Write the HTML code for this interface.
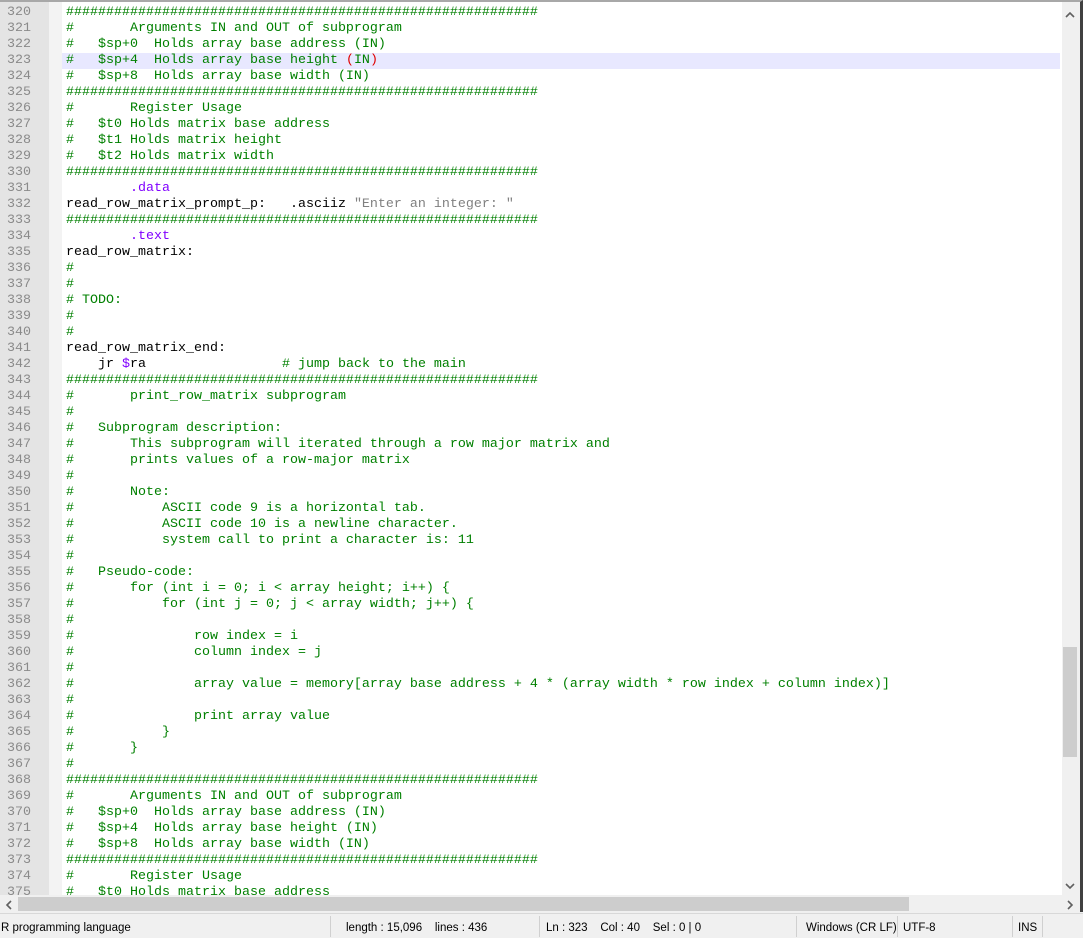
<!DOCTYPE html>
<html><head><meta charset="utf-8"><style>
*{margin:0;padding:0;box-sizing:border-box}
body{width:1083px;height:938px;overflow:hidden;background:#f0f0f0;position:relative;font-family:"Liberation Sans",sans-serif}
#ed{position:absolute;left:0;top:0;width:1083px;height:912px;background:#fff;border-top:2px solid #a8a8a8;border-right:3px solid #404040;overflow:hidden}
#gut{position:absolute;left:0;top:0;width:49px;height:893px;background:#e4e4e4}
#fold{position:absolute;left:49px;top:0;width:13px;height:893px;background:#f3f3f3}
#lines{position:absolute;left:0;top:3px;width:1062px}
.l{height:16px;line-height:16px;position:relative;white-space:pre;font-family:"Liberation Mono",monospace;font-size:13.33px}
.n{position:absolute;left:0;width:31px;text-align:right;color:#8a8a8a}
.t{position:absolute;left:66px;color:#000}
.cur{position:absolute;left:62px;width:998px;height:16px;background:#e8e8ff}
.c{color:#008000}
.k{color:#8000ff}
.s{color:#808080}
.r{color:#e00000}
#vs{position:absolute;left:1062px;top:0;width:18px;height:893px;background:#f0f0f0}
#vt{position:absolute;left:1063px;top:645px;width:14px;height:110px;background:#cdcdcd}
#hs{position:absolute;left:0;top:893px;width:1080px;height:17px;background:#f0f0f0}
#ht{position:absolute;left:18px;top:895px;width:891px;height:14px;background:#cdcdcd}
.ar{position:absolute;font-size:11px;color:#606060;font-family:"DejaVu Sans",sans-serif}
#sb{position:absolute;left:0;top:913px;width:1083px;height:25px;background:#f0f0f0;border-top:1px solid #d8d8d8;font-size:11.5px;color:#000}
#sb span{position:absolute;top:8px;white-space:pre}
.sep{position:absolute;top:2px;width:1px;height:21px;background:#d0d0d0}
</style></head><body>
<div id="ed">
<div id="gut"></div><div id="fold"></div>
<div id="lines">
<div class="l"><span class="n">320</span><span class="t c">###########################################################</span></div>
<div class="l"><span class="n">321</span><span class="t c">#       Arguments IN and OUT of subprogram</span></div>
<div class="l"><span class="n">322</span><span class="t c">#   $sp+0  Holds array base address (IN)</span></div>
<div class="l"><div class="cur"></div><span class="n">323</span><span class="t c">#   $sp+4  Holds array base height <span class="r">(</span>IN<span class="r">)</span></span></div>
<div class="l"><span class="n">324</span><span class="t c">#   $sp+8  Holds array base width (IN)</span></div>
<div class="l"><span class="n">325</span><span class="t c">###########################################################</span></div>
<div class="l"><span class="n">326</span><span class="t c">#       Register Usage</span></div>
<div class="l"><span class="n">327</span><span class="t c">#   $t0 Holds matrix base address</span></div>
<div class="l"><span class="n">328</span><span class="t c">#   $t1 Holds matrix height</span></div>
<div class="l"><span class="n">329</span><span class="t c">#   $t2 Holds matrix width</span></div>
<div class="l"><span class="n">330</span><span class="t c">###########################################################</span></div>
<div class="l"><span class="n">331</span><span class="t">        <span class="k">.data</span></span></div>
<div class="l"><span class="n">332</span><span class="t">read_row_matrix_prompt_p:   .asciiz <span class="s">"Enter an integer: "</span></span></div>
<div class="l"><span class="n">333</span><span class="t c">###########################################################</span></div>
<div class="l"><span class="n">334</span><span class="t">        <span class="k">.text</span></span></div>
<div class="l"><span class="n">335</span><span class="t">read_row_matrix:</span></div>
<div class="l"><span class="n">336</span><span class="t c">#</span></div>
<div class="l"><span class="n">337</span><span class="t c">#</span></div>
<div class="l"><span class="n">338</span><span class="t c"># TODO:</span></div>
<div class="l"><span class="n">339</span><span class="t c">#</span></div>
<div class="l"><span class="n">340</span><span class="t c">#</span></div>
<div class="l"><span class="n">341</span><span class="t">read_row_matrix_end:</span></div>
<div class="l"><span class="n">342</span><span class="t">    jr <span class="k">$</span>ra                 <span class="c"># jump back to the main</span></span></div>
<div class="l"><span class="n">343</span><span class="t c">###########################################################</span></div>
<div class="l"><span class="n">344</span><span class="t c">#       print_row_matrix subprogram</span></div>
<div class="l"><span class="n">345</span><span class="t c">#</span></div>
<div class="l"><span class="n">346</span><span class="t c">#   Subprogram description:</span></div>
<div class="l"><span class="n">347</span><span class="t c">#       This subprogram will iterated through a row major matrix and</span></div>
<div class="l"><span class="n">348</span><span class="t c">#       prints values of a row-major matrix</span></div>
<div class="l"><span class="n">349</span><span class="t c">#</span></div>
<div class="l"><span class="n">350</span><span class="t c">#       Note:</span></div>
<div class="l"><span class="n">351</span><span class="t c">#           ASCII code 9 is a horizontal tab.</span></div>
<div class="l"><span class="n">352</span><span class="t c">#           ASCII code 10 is a newline character.</span></div>
<div class="l"><span class="n">353</span><span class="t c">#           system call to print a character is: 11</span></div>
<div class="l"><span class="n">354</span><span class="t c">#</span></div>
<div class="l"><span class="n">355</span><span class="t c">#   Pseudo-code:</span></div>
<div class="l"><span class="n">356</span><span class="t c">#       for (int i = 0; i &lt; array height; i++) {</span></div>
<div class="l"><span class="n">357</span><span class="t c">#           for (int j = 0; j &lt; array width; j++) {</span></div>
<div class="l"><span class="n">358</span><span class="t c">#</span></div>
<div class="l"><span class="n">359</span><span class="t c">#               row index = i</span></div>
<div class="l"><span class="n">360</span><span class="t c">#               column index = j</span></div>
<div class="l"><span class="n">361</span><span class="t c">#</span></div>
<div class="l"><span class="n">362</span><span class="t c">#               array value = memory[array base address + 4 * (array width * row index + column index)]</span></div>
<div class="l"><span class="n">363</span><span class="t c">#</span></div>
<div class="l"><span class="n">364</span><span class="t c">#               print array value</span></div>
<div class="l"><span class="n">365</span><span class="t c">#           }</span></div>
<div class="l"><span class="n">366</span><span class="t c">#       }</span></div>
<div class="l"><span class="n">367</span><span class="t c">#</span></div>
<div class="l"><span class="n">368</span><span class="t c">###########################################################</span></div>
<div class="l"><span class="n">369</span><span class="t c">#       Arguments IN and OUT of subprogram</span></div>
<div class="l"><span class="n">370</span><span class="t c">#   $sp+0  Holds array base address (IN)</span></div>
<div class="l"><span class="n">371</span><span class="t c">#   $sp+4  Holds array base height (IN)</span></div>
<div class="l"><span class="n">372</span><span class="t c">#   $sp+8  Holds array base width (IN)</span></div>
<div class="l"><span class="n">373</span><span class="t c">###########################################################</span></div>
<div class="l"><span class="n">374</span><span class="t c">#       Register Usage</span></div>
<div class="l"><span class="n">375</span><span class="t c">#   $t0 Holds matrix base address</span></div>
</div>
<div id="vs"></div><div id="vt"></div>
<svg style="position:absolute;left:1064px;top:9px" width="12" height="8"><path d="M2 6 L6 2 L10 6" stroke="#606060" stroke-width="1.6" fill="none"/></svg>
<svg style="position:absolute;left:1064px;top:880px" width="12" height="8"><path d="M2 2 L6 6 L10 2" stroke="#606060" stroke-width="1.6" fill="none"/></svg>
<div id="hs"></div><div id="ht"></div>
<svg style="position:absolute;left:5px;top:897px" width="8" height="12"><path d="M6 2 L2 6 L6 10" stroke="#606060" stroke-width="1.6" fill="none"/></svg>
<svg style="position:absolute;left:1066px;top:897px" width="8" height="12"><path d="M2 2 L6 6 L2 10" stroke="#606060" stroke-width="1.6" fill="none"/></svg>
</div>
<div id="sb">
<span style="left:1px">R programming language</span>
<div class="sep" style="left:330px"></div>
<span style="left:346px">length : 15,096    lines : 436</span>
<div class="sep" style="left:539px"></div>
<span style="left:546px">Ln : 323    Col : 40    Sel : 0 | 0</span>
<div class="sep" style="left:796px"></div>
<span style="left:806px">Windows (CR LF)</span>
<div class="sep" style="left:897px"></div>
<span style="left:903px">UTF-8</span>
<div class="sep" style="left:1012px"></div>
<span style="left:1018px">INS</span>
<div class="sep" style="left:1042px"></div>
</div>
</body></html>
